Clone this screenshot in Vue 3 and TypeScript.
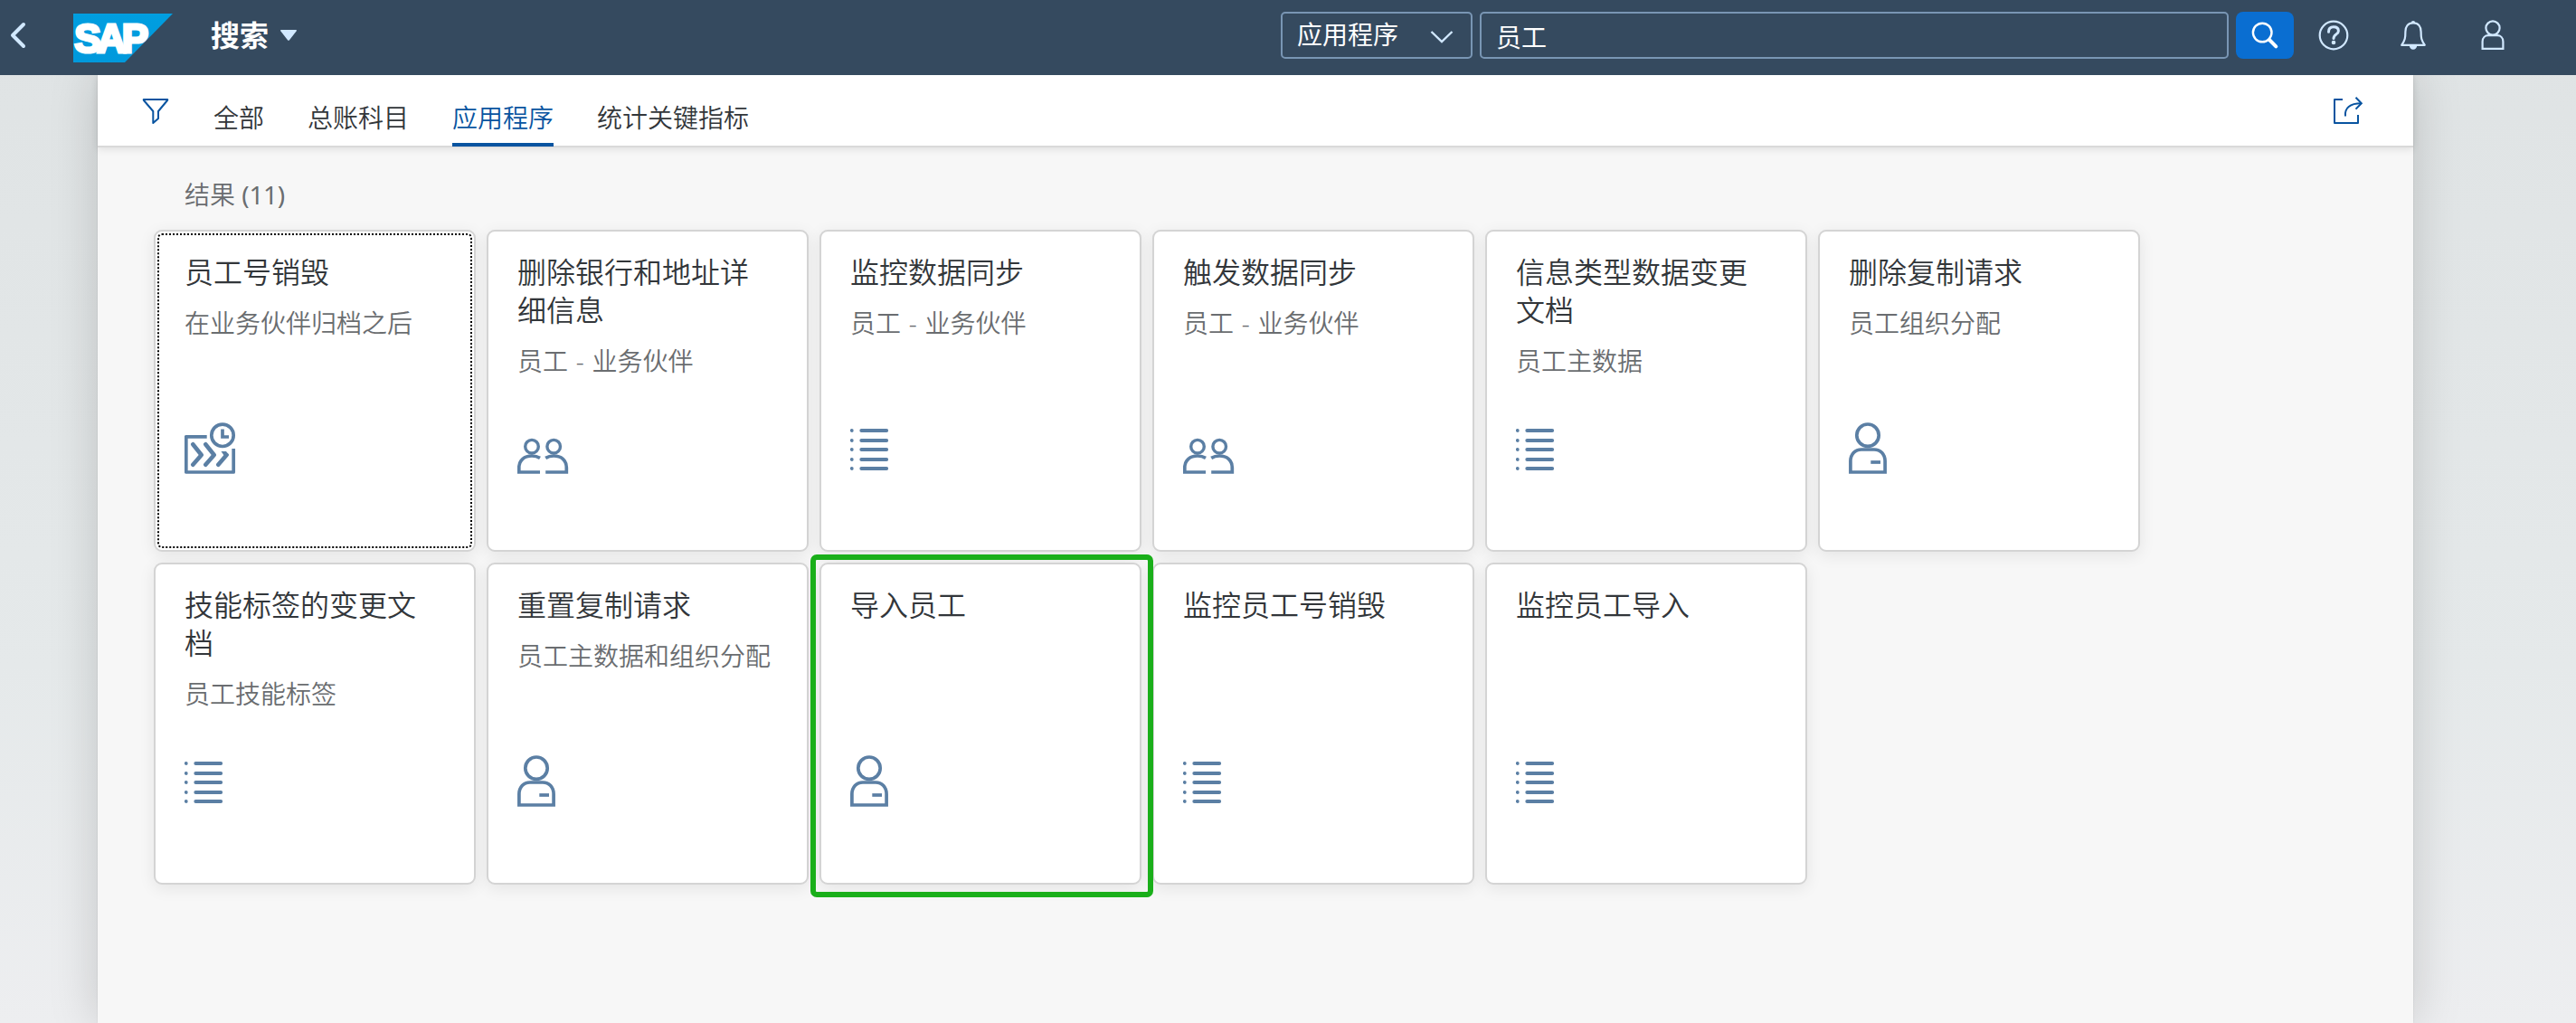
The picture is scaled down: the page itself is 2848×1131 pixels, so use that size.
<script setup lang="ts">
type IconName = 'process' | 'group' | 'list' | 'person'

interface Tile {
  title: string
  subtitle?: string
  icon: IconName
  focused?: boolean
  marked?: boolean
}

const tabs: string[] = ['全部', '总账科目', '应用程序', '统计关键指标']
const activeTab = '应用程序'

const tiles: Tile[] = [
  { title: '员工号销毁', subtitle: '在业务伙伴归档之后', icon: 'process', focused: true },
  { title: '删除银行和地址详细信息', subtitle: '员工 - 业务伙伴', icon: 'group' },
  { title: '监控数据同步', subtitle: '员工 - 业务伙伴', icon: 'list' },
  { title: '触发数据同步', subtitle: '员工 - 业务伙伴', icon: 'group' },
  { title: '信息类型数据变更文档', subtitle: '员工主数据', icon: 'list' },
  { title: '删除复制请求', subtitle: '员工组织分配', icon: 'person' },
  { title: '技能标签的变更文档', subtitle: '员工技能标签', icon: 'list' },
  { title: '重置复制请求', subtitle: '员工主数据和组织分配', icon: 'person' },
  { title: '导入员工', icon: 'person', marked: true },
  { title: '监控员工号销毁', icon: 'list' },
  { title: '监控员工导入', icon: 'list' },
]

const listRows: number[] = [9, 20, 30, 41, 51]
</script>

<template>
  <div class="page">
    <header class="shell">
      <svg class="back" width="20" height="32" viewBox="0 0 20 32" fill="none">
        <path d="M16 4 L4 16 L16 28" stroke="#d1e8ff" stroke-width="4" stroke-linecap="round" stroke-linejoin="round" />
      </svg>
      <svg class="logo" width="110" height="54" viewBox="0 0 110 54">
        <defs>
          <linearGradient id="sapBlue" x1="0" y1="0" x2="0" y2="1">
            <stop offset="0" stop-color="#009ee0" />
            <stop offset="1" stop-color="#0099dc" />
          </linearGradient>
        </defs>
        <path d="M0 0 H110 L57 54 H0 Z" fill="url(#sapBlue)" />
        <text x="1.2" y="43" class="logo-text" textLength="82" lengthAdjust="spacing">SAP</text>
      </svg>
      <div class="shell-title">搜索</div>
      <svg class="caret" width="18" height="12" viewBox="0 0 18 12"><path d="M1 0 H17 Q18.6 0 17.6 1.4 L10 11.3 Q9 12.4 8 11.3 L0.4 1.4 Q-0.6 0 1 0 Z" fill="#d1e8ff" /></svg>

      <div class="search">
        <div class="scope">
          <span>应用程序</span>
          <svg width="26" height="16" viewBox="0 0 26 16" fill="none"><path d="M1.5 2 L13 13 L24.5 2" stroke="#d1e8ff" stroke-width="2.4" /></svg>
        </div>
        <div class="field">员工</div>
        <div class="go">
          <svg width="32" height="32" viewBox="0 0 32 32" fill="none" stroke="#fff">
            <circle cx="13.2" cy="13" r="10.3" stroke-width="2.4" />
            <path d="M21 21 L28.3 28.3" stroke-width="4" stroke-linecap="round" />
          </svg>
        </div>
      </div>

      <div class="actions">
        <svg width="34" height="34" viewBox="0 0 34 34" fill="none" stroke="#d1e8ff">
          <circle cx="17" cy="17" r="15.3" stroke-width="2.2" />
          <path d="M11.5 13.2 C11.5 9.6 13.6 7.8 17 7.8 C20.4 7.8 22.4 9.6 22.4 12.2 C22.4 16 17 15.8 17 20.6" stroke-width="3" stroke-linecap="round" />
          <circle cx="17" cy="25" r="2.3" fill="#d1e8ff" stroke="none" />
        </svg>
        <svg width="34" height="34" viewBox="0 0 34 34" fill="none" stroke="#d1e8ff">
          <path d="M17 3.4 C11 3.4 8.4 7.4 8.4 13 C8.4 20 8 22.5 4.2 27.8 H29.8 C26 22.5 25.6 20 25.6 13 C25.6 7.4 23 3.4 17 3.4 Z" stroke-width="2.2" stroke-linejoin="round" />
          <path d="M14.8 3.2 A2.2 2.2 0 0 1 19.2 3.2 Z M12.8 28.5 H21.2 A4.2 4.2 0 0 1 12.8 28.5 Z" fill="#d1e8ff" stroke="none" />
        </svg>
        <svg width="34" height="34" viewBox="0 0 34 34" fill="none" stroke="#d1e8ff" stroke-width="2.2">
          <circle cx="17" cy="9" r="7.6" />
          <path d="M5.6 31.9 V24 C5.6 19.6 8.6 17.2 12 17.2 H22 C25.4 17.2 28.4 19.6 28.4 24 V31.9 Z" />
        </svg>
      </div>
    </header>

    <main class="panel">
      <nav class="tabbar">
        <svg class="filter" width="30" height="30" viewBox="0 0 30 30" fill="none" stroke="#0854a0" stroke-width="2" stroke-linejoin="round">
          <path d="M2 2 H28 Q28.6 2 28 3 L18 15 V23 L12.3 28 V15 L2 3 Q1.4 2 2 2 Z" />
        </svg>
        <div class="tabs">
          <div v-for="tab in tabs" :key="tab" class="tab" :class="{ active: tab === activeTab }">{{ tab }}</div>
        </div>
        <svg class="share" width="34" height="32" viewBox="0 0 34 32" fill="none" stroke="#0854a0" stroke-width="2">
          <path d="M11 4 H2 V30 H28 V21" stroke-linejoin="round" />
          <path d="M14 22.5 C13 13.5 19 8.3 31.5 8.3" />
          <path d="M25.5 1.8 L31.8 8.2 L25.5 14.6" />
        </svg>
      </nav>

      <div class="count">结果 <span class="number">({{ tiles.length }})</span></div>

      <section class="grid">
        <article v-for="tile in tiles" :key="tile.title" class="tile" :class="{ focused: tile.focused }">
          <h3>{{ tile.title }}</h3>
          <p v-if="tile.subtitle">{{ tile.subtitle }}</p>
          <svg class="tile-icon" width="58" height="58" viewBox="0 0 58 58" fill="none" stroke="#5b7fa4" stroke-width="3.7">
            <template v-if="tile.icon === 'person'">
              <circle cx="21" cy="14.2" r="12.2" />
              <path d="M1.9 55 V43 C1.9 35 7 30 14 30 H28 C35 30 40.1 35 40.1 43 V55 Z" />
              <path d="M24.3 44 H35" />
            </template>
            <template v-else-if="tile.icon === 'group'">
              <circle cx="16" cy="26.7" r="7.3" stroke-width="3.4" />
              <circle cx="40.2" cy="26.7" r="7.3" stroke-width="3.4" />
              <path d="M25 39.3 C22.5 37.8 19.5 37 16 37 C8 37 1.8 41.5 1.8 50 V55 H25" />
              <path d="M31.2 39.3 C33.7 37.8 36.7 37 40.2 37 C48.2 37 54.3 41.5 54.3 50 V55 H31.2" />
            </template>
            <template v-else-if="tile.icon === 'list'">
              <g v-for="y in listRows" :key="y">
                <circle cx="1.8" :cy="y" r="1.9" fill="#5b7fa4" stroke="none" />
                <path :d="`M12.3 ${y} H40.2`" stroke-linecap="round" stroke-width="3.9" />
              </g>
            </template>
            <template v-else>
              <path d="M24.7 15.9 H1.8 V55 H54.2 V29" stroke-linejoin="round" />
              <circle cx="42" cy="14.3" r="12.2" />
              <path d="M42 7.5 V16 H49" />
              <g stroke-width="4.6" stroke-linecap="round" stroke-linejoin="round">
                <path d="M9.3 24.2 L18.7 36 L9.3 46.8" />
                <path d="M23.3 24.2 L32.7 36 L23.3 46.8" />
                <path d="M46.5 36 L37.3 46.8" />
              </g>
              <path d="M40.5 32 H46 L49 36 L45 38.5 Z" fill="#5b7fa4" stroke="none" />
            </template>
          </svg>
          <div v-if="tile.marked" class="marker"></div>
        </article>
      </section>
    </main>
  </div>
</template>

<style>
html,
body {
  margin: 0;
  overflow: hidden;
}
</style>

<style scoped>
.page {
  width: 2848px;
  height: 1131px;
  overflow: hidden;
  display: flex;
  flex-direction: column;
  background: linear-gradient(#dfe3e4, #e5e9ea 65%, #edeef0);
  font-family: 'Noto Sans', 'Noto Sans CJK SC', sans-serif;
  font-weight: 350;
  color: #32363a;
}
.shell {
  flex: none;
  height: 83px;
  box-sizing: border-box;
  background: #354a5f;
  display: flex;
  align-items: flex-start;
  z-index: 1;
}
.back {
  margin: 23px 0 0 10px;
}
.logo {
  margin: 15px 0 0 51px;
}
.logo-text {
  font: 900 44px 'Liberation Sans', Arial, sans-serif;
  fill: #fff;
  stroke: #fff;
  stroke-width: 3.2px;
}
.shell-title {
  margin: 13px 0 0 42px;
  font-family: 'Noto Sans CJK SC', sans-serif;
  font-weight: 700;
  font-size: 32px;
  line-height: 48px;
  color: #fff;
}
.caret {
  margin: 33px 0 0 13px;
}
.search {
  display: flex;
  gap: 8px;
  margin: 13px 0 0 auto;
  color: #fff;
  font-weight: 400;
  font-size: 28px;
}
.scope,
.field {
  box-sizing: border-box;
  height: 52px;
  border: 2px solid #7996b4;
  border-radius: 5px;
  line-height: 46px;
  padding-left: 16px;
}
.scope {
  width: 212px;
  display: flex;
  align-items: flex-start;
  justify-content: space-between;
  padding-right: 19px;
}
.scope svg {
  margin-top: 18px;
}
.field {
  width: 828px;
  line-height: 52px;
}
.go {
  width: 64px;
  height: 52px;
  border-radius: 8px;
  background: #0a6ed1;
  display: flex;
  align-items: center;
  justify-content: center;
}
.actions {
  display: flex;
  gap: 54px;
  margin: 22px 75px 0 27px;
}
.panel {
  width: 2560px;
  flex: 1;
  margin-left: 108px;
  background: #f7f7f7;
  box-shadow: 0 0 50px rgba(0, 0, 0, 0.17), 0 0 2px rgba(0, 0, 0, 0.1);
}
.tabbar {
  height: 80px;
  box-sizing: border-box;
  background: #fff;
  border-bottom: 2px solid #d9d9d9;
  box-shadow: 0 2px 8px rgba(0, 0, 0, 0.1);
  display: flex;
  align-items: flex-start;
}
.filter {
  margin: 25px 0 0 49px;
}
.tabs {
  display: flex;
  gap: 48px;
  margin-left: 49px;
}
.tab {
  height: 79px;
  box-sizing: border-box;
  padding-top: 26px;
  font-size: 28px;
  line-height: 42px;
}
.tab.active {
  color: #0854a0;
  border-bottom: 4px solid #0854a0;
}
.share {
  margin: 23px 55px 0 auto;
}
.count {
  margin: 31px 0 0 96px;
  height: 42px;
  font-size: 28px;
  line-height: 42px;
  color: #6a6d70;
}
.number {
  font-weight: 400;
  letter-spacing: -0.3px;
}
.grid {
  display: grid;
  grid-template-columns: repeat(6, 356px);
  grid-auto-rows: 356px;
  gap: 12px;
  margin: 18px 0 0 62px;
}
.tile {
  position: relative;
  box-sizing: border-box;
  border: 2px solid #d4d4d4;
  border-radius: 9px;
  background: #fff;
  padding: 24px 32px 0;
  box-shadow: 0 4px 18px rgba(0, 0, 0, 0.08);
}
.tile.focused {
  outline: 2px dotted #000;
  outline-offset: -6px;
}
.tile h3 {
  margin: 0;
  width: 260px;
  font-size: 32px;
  font-weight: 350;
  line-height: 42px;
}
.tile p {
  margin: 14px 0 0;
  font-size: 28px;
  line-height: 42px;
  word-spacing: 1.4px;
  color: #6a6d70;
  white-space: nowrap;
}
.tile-icon {
  position: absolute;
  left: 32px;
  top: 211px;
}
.marker {
  position: absolute;
  z-index: 2;
  inset: -11px -15px -16px -12px;
  border: 6.5px solid #1aaf1a;
  border-radius: 7px;
}
</style>
